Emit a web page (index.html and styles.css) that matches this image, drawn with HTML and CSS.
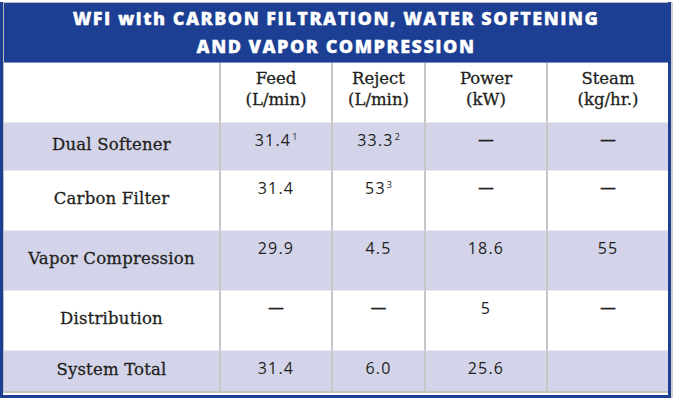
FILE: index.html
```html
<!DOCTYPE html>
<html lang="en">
<head>
<meta charset="utf-8">
<title>WFI with Carbon Filtration</title>
<link rel="stylesheet" href="styles.css">
</head>
<body>
<div class="frame">
  <div class="card">
    <div class="title">WFI with CARBON FILTRATION, WATER SOFTENING<br>AND VAPOR COMPRESSION</div>
    <table class="data">
      <thead>
        <tr class="r-head">
          <th class="c-label"></th>
          <th class="c-feed">Feed<br>(L/min)</th>
          <th class="c-reject">Reject<br>(L/min)</th>
          <th class="c-power">Power<br>(kW)</th>
          <th class="c-steam">Steam<br>(kg/hr.)</th>
        </tr>
      </thead>
      <tbody>
        <tr class="shade r-dual">
          <td class="label">Dual Softener</td>
          <td class="num">31.4<sup>1</sup></td>
          <td class="num">33.3<sup>2</sup></td>
          <td class="num"><span class="dash">—</span></td>
          <td class="num"><span class="dash">—</span></td>
        </tr>
        <tr class="plain r-std">
          <td class="label">Carbon Filter</td>
          <td class="num">31.4</td>
          <td class="num">53<sup>3</sup></td>
          <td class="num"><span class="dash">—</span></td>
          <td class="num"><span class="dash">—</span></td>
        </tr>
        <tr class="shade r-std">
          <td class="label">Vapor Compression</td>
          <td class="num">29.9</td>
          <td class="num">4.5</td>
          <td class="num">18.6</td>
          <td class="num">55</td>
        </tr>
        <tr class="plain r-std">
          <td class="label">Distribution</td>
          <td class="num"><span class="dash">—</span></td>
          <td class="num"><span class="dash">—</span></td>
          <td class="num">5</td>
          <td class="num"><span class="dash">—</span></td>
        </tr>
        <tr class="shade r-total">
          <td class="label">System Total</td>
          <td class="num">31.4</td>
          <td class="num">6.0</td>
          <td class="num">25.6</td>
          <td class="num"></td>
        </tr>
      </tbody>
    </table>
  </div>
</div>
</body>
</html>
```

FILE: styles.css
```css
html, body {
  margin: 0;
  padding: 0;
  background: #ffffff;
}

body {
  padding-top: 2px;
}

.frame {
  width: 671px;
  box-sizing: border-box;
  border-left: 3px solid #1c3f93;
  border-right: 3px solid #1c3f93;
  border-bottom: 3px solid #1c3f93;
  background: #ffffff;
  box-shadow: 2px 0 0 #d0d0d0;
}

.card {
  border-top: 1px solid #b9b9b9;
  border-left: 1px solid #b9b9b9;
  border-bottom: 2px solid #c2c2c2;
  margin-bottom: 2px;
}

.title {
  height: 60px;
  box-sizing: border-box;
  padding-top: 1px;
  background: #1c3f93;
  border-bottom: 1px solid #7f8fc4;
  color: #ffffff;
  font-family: "Open Sans", "DejaVu Sans", sans-serif;
  font-weight: 800;
  font-size: 18px;
  line-height: 28px;
  letter-spacing: 1.5px;
  text-align: center;
  -webkit-text-stroke: 0.3px #ffffff;
}

.data {
  width: 664px;
  table-layout: fixed;
  border-collapse: separate;
  border-spacing: 0;
  color: #231f20;
}

.data th,
.data td {
  padding: 0;
  box-sizing: border-box;
  text-align: center;
}

.data th + th,
.data td + td {
  border-left: 2px solid #c6c6c6;
}

.c-label { width: 215px; }
.c-feed { width: 112px; }
.c-reject { width: 93px; }
.c-power { width: 122px; }
.c-steam { width: 122px; }

.r-head th {
  height: 59px;
  vertical-align: top;
  padding-top: 5px;
  font-family: "DejaVu Serif", serif;
  font-weight: normal;
  font-size: 16.5px;
  line-height: 21px;
  background: #ffffff;
  -webkit-text-stroke: 0.3px #231f20;
}

.r-dual td { height: 48px; }
.r-std td { height: 60px; }
.r-total td { height: 41px; }

.data tbody td {
  border-top: 1px solid #e7e7f1;
}

.shade td { background: #d3d4e9; }
.plain td { background: #ffffff; }

.label {
  vertical-align: middle;
  padding-bottom: 4px !important;
  font-family: "DejaVu Serif", serif;
  font-size: 16.5px;
  line-height: 21px;
  letter-spacing: 0.2px;
  -webkit-text-stroke: 0.3px #231f20;
}

.num {
  vertical-align: top;
  padding-top: 7px !important;
  font-family: "Open Sans", "DejaVu Sans", sans-serif;
  font-weight: 500;
  font-size: 16px;
  line-height: 20px;
  letter-spacing: 1.2px;
  color: #1f1f22;
}

.num sup {
  font-size: 9px;
  line-height: 0;
  vertical-align: 6px;
  letter-spacing: 0;
  margin-left: 1px;
}

.dash {
  display: inline-block;
  font-family: "DejaVu Sans", sans-serif;
  font-size: 16px;
  letter-spacing: 0;
  vertical-align: 4px;
  color: #1e1e1e;
  -webkit-text-stroke: 0.3px #1e1e1e;
}
```
